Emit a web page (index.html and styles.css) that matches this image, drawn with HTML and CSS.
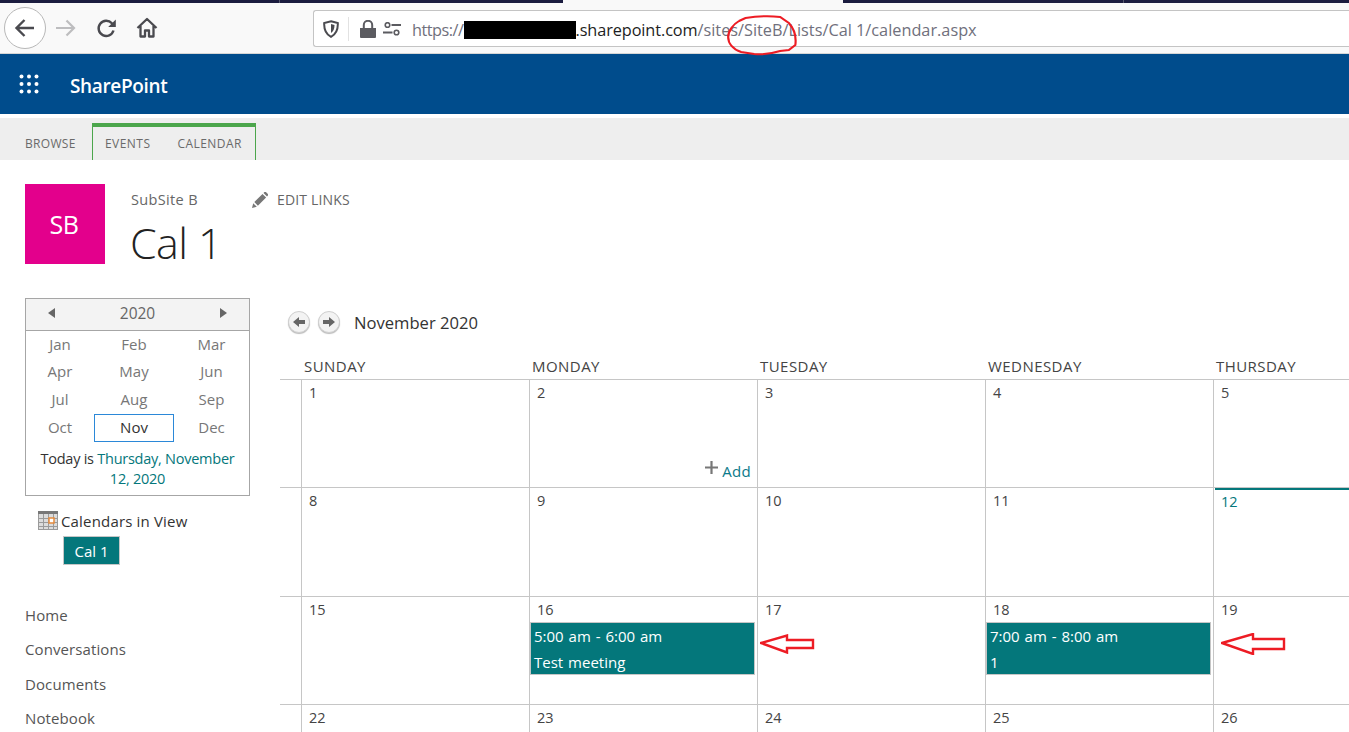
FILE: index.html
```html
<!DOCTYPE html>
<html lang="en">
<head>
<meta charset="utf-8">
<title>Cal 1</title>
<link rel="stylesheet" href="styles.css">
</head>
<body>
<div class="tabstrip">
  <div class="strip-seg strip-a"></div>
  <div class="strip-seg strip-b"></div>
  <div class="strip-active"></div>
  <div class="strip-seg strip-c"></div>
  <div class="strip-seg strip-d"></div>
</div>
<div class="toolbar">
  <div class="back-btn">
    <svg width="24" height="24" viewBox="0 0 24 24"><path d="M21 12H3.500M11.500 4l-8 8 8 8" fill="none" stroke="#4a4a4f" stroke-width="2.400"/></svg>
  </div>
  <svg class="tool fwd" width="22" height="22" viewBox="0 0 22 22"><path d="M1 11h18M11.500 3.500l7.500 7.500-7.500 7.500" fill="none" stroke="#bdbdbf" stroke-width="2.200"/></svg>
  <svg class="tool reload" width="22" height="22" viewBox="0 0 22 22"><path d="M17.500 13.500a7.600 7.600 0 1 1-1.600-7.200L18 8.500" fill="none" stroke="#4a4a4f" stroke-width="2.400"/><path d="M19.800 2.500v7.600h-7.600z" fill="#4a4a4f"/></svg>
  <svg class="tool home" width="22" height="22" viewBox="0 0 22 22"><path d="M1.500 11 11 2l9.500 9M4.500 9v10.500h4.500v-6h4v6h4.500V9" fill="none" stroke="#4a4a4f" stroke-width="2.300" stroke-linejoin="round"/></svg>
  <div class="urlbar">
    <svg class="shield" width="16" height="18" viewBox="0 0 16 18"><path d="M8 1.200 14.800 3c.3 6.500-1.500 11-6.800 13.800C2.700 14 .9 9.500 1.200 3z" fill="none" stroke="#4a4a4f" stroke-width="2"/><path d="M8 4v9c2.500-1.700 3.500-4.500 3.500-8z" fill="#4a4a4f"/></svg>
    <div class="url-sep"></div>
    <svg class="lock" width="16" height="18" viewBox="0 0 16 18"><path d="M0 8h16v9a1 1 0 0 1-1 1H1a1 1 0 0 1-1-1z" fill="#5b5b60"/><path d="M3.800 8.500V5a4.200 4.200 0 0 1 8.400 0v3.500" fill="none" stroke="#5b5b60" stroke-width="2"/></svg>
    <svg class="perm" width="18" height="14" viewBox="0 0 18 14"><circle cx="4.500" cy="3" r="2.300" fill="none" stroke="#5b5b60" stroke-width="1.600"/><path d="M8.500 3H18M0 10.500h9.500" stroke="#5b5b60" stroke-width="2"/><circle cx="13.500" cy="10.500" r="2.300" fill="none" stroke="#5b5b60" stroke-width="1.600"/></svg>
    <div class="url-text"><span class="url-scheme">https://</span><span class="redact"></span><span class="url-host">.sharepoint.com</span>/sites/SiteB/Lists/Cal 1/calendar.aspx</div>
  </div>
</div>
<header class="suitebar">
  <svg class="waffle" width="20" height="20" viewBox="0 0 20 20" fill="#fff">
    <circle cx="2.500" cy="2.500" r="2"/><circle cx="10" cy="2.500" r="2"/><circle cx="17.500" cy="2.500" r="2"/>
    <circle cx="2.500" cy="10" r="2"/><circle cx="10" cy="10" r="2"/><circle cx="17.500" cy="10" r="2"/>
    <circle cx="2.500" cy="17.500" r="2"/><circle cx="10" cy="17.500" r="2"/><circle cx="17.500" cy="17.500" r="2"/>
  </svg>
  <div class="brand">SharePoint</div>
</header>
<nav class="ribbon">
  <div class="rib-tab rib-browse">BROWSE</div>
  <div class="rib-group">
    <div class="rib-tab">EVENTS</div>
    <div class="rib-tab">CALENDAR</div>
  </div>
</nav>
<section class="site-head">
  <div class="logo">SB</div>
  <div class="site-titles">
    <div class="site-top">
      <div class="site-name">SubSite B</div>
      <div class="edit-links">
        <svg width="16" height="16" viewBox="0 0 16 16"><path d="M0 16l1.200-4.800 3.600 3.600zM2.300 10.100 10.500 1.900l3.600 3.600-8.200 8.200zM11.500.9 12.400 0a1.200 1.200 0 0 1 1.500 0l2 2a1.200 1.200 0 0 1 0 1.500l-.9.900z" fill="#777"/></svg>
        <span>EDIT LINKS</span>
      </div>
    </div>
    <h1 class="page-title">Cal 1</h1>
  </div>
</section>
<main class="content">
  <aside class="sidebar">
    <div class="datepicker">
      <div class="dp-head">
        <span class="tri tri-left"></span>
        <span class="dp-year">2020</span>
        <span class="tri tri-right"></span>
      </div>
      <div class="dp-months">
        <div>Jan</div><div>Feb</div><div>Mar</div>
        <div>Apr</div><div>May</div><div>Jun</div>
        <div>Jul</div><div>Aug</div><div>Sep</div>
        <div>Oct</div><div class="dp-current">Nov</div><div>Dec</div>
      </div>
      <div class="dp-today">Today is <span class="teal">Thursday, November 12, 2020</span></div>
    </div>
    <div class="civ">
      <svg width="20" height="19" viewBox="0 0 20 19">
        <rect width="20" height="19" fill="#dcdcdc"/>
        <rect width="20" height="3" fill="#777"/>
        <path d="M.5 3v16M5.500 3v16M10.500 3v16M15.500 3v16M19.500 3v16M0 7.500h20M0 11.500h20M0 15.500h20M0 18.500h20" stroke="#9a9a9a" stroke-width="1"/>
        <rect x="11" y="7" width="5" height="5" fill="#fff" stroke="#e58a3c" stroke-width="1.500"/>
      </svg>
      <span>Calendars in View</span>
    </div>
    <div class="cal-chip">Cal 1</div>
    <ul class="quicklaunch">
      <li>Home</li>
      <li>Conversations</li>
      <li>Documents</li>
      <li>Notebook</li>
    </ul>
  </aside>
  <section class="calendar">
    <div class="cal-nav">
      <span class="round-btn"><svg width="12" height="12" viewBox="0 0 12 12"><path d="M0 6l6-5v3h6v4H6v3z" fill="#666"/></svg></span>
      <span class="round-btn"><svg width="12" height="12" viewBox="0 0 12 12"><path d="M12 6 6 1v3H0v4h6v3z" fill="#666"/></svg></span>
      <span class="cal-month">November 2020</span>
    </div>
    <div class="weekdays">
      <div>SUNDAY</div><div>MONDAY</div><div>TUESDAY</div><div>WEDNESDAY</div><div>THURSDAY</div>
    </div>
    <div class="week h108">
      <div class="gutter"></div>
      <div class="day"><span class="num">1</span></div>
      <div class="day">
        <span class="num">2</span>
        <div class="add">
          <svg width="13" height="13" viewBox="0 0 13 13"><path d="M6.500 0v13M0 6.500h13" stroke="#777" stroke-width="2.200"/></svg>
          <span>Add</span>
        </div>
      </div>
      <div class="day"><span class="num">3</span></div>
      <div class="day"><span class="num">4</span></div>
      <div class="day"><span class="num">5</span></div>
    </div>
    <div class="week h109">
      <div class="gutter"></div>
      <div class="day"><span class="num">8</span></div>
      <div class="day"><span class="num">9</span></div>
      <div class="day"><span class="num">10</span></div>
      <div class="day"><span class="num">11</span></div>
      <div class="day"><div class="today-mark"></div><span class="num num-today">12</span></div>
    </div>
    <div class="week h108">
      <div class="gutter"></div>
      <div class="day"><span class="num">15</span></div>
      <div class="day">
        <span class="num">16</span>
        <div class="event"><div>5:00 am - 6:00 am</div><div>Test meeting</div></div>
      </div>
      <div class="day"><span class="num">17</span></div>
      <div class="day">
        <span class="num">18</span>
        <div class="event"><div>7:00 am - 8:00 am</div><div>1</div></div>
      </div>
      <div class="day"><span class="num">19</span></div>
    </div>
    <div class="week h-last">
      <div class="gutter"></div>
      <div class="day"><span class="num">22</span></div>
      <div class="day"><span class="num">23</span></div>
      <div class="day"><span class="num">24</span></div>
      <div class="day"><span class="num">25</span></div>
      <div class="day"><span class="num">26</span></div>
    </div>
  </section>
</main>
<svg class="annot annot-circle" width="78" height="42" viewBox="0 0 72 42" preserveAspectRatio="none"><path d="M12 6 18 3 C30 1 42 1 50 2 L58 8 C63 14 65 22 64 30 L58 35 L50 36 C44 38 34 40 26 39 L14 37 C6 34 2 28 2 22 C2 16 7 9 12 6" fill="none" stroke="#ed1c24" stroke-width="2"/></svg>
<svg class="annot annot-arrow1" width="56" height="20" viewBox="0 0 56 20"><path d="M1 9 27 1.500V6H53v8H27v4.500z" fill="none" stroke="#ed1c24" stroke-width="2.400"/></svg>
<svg class="annot annot-arrow2" width="66" height="22" viewBox="0 0 66 22"><path d="M1 10 32 1v5H63v10H32v5z" fill="none" stroke="#ed1c24" stroke-width="2.400"/></svg>
</body>
</html>
```
FILE: styles.css
```css
* { box-sizing: border-box; }
html, body { margin: 0; padding: 0; height: 732px; overflow: hidden; background: #fff; }
body { position: relative; font-family: "Open Sans", "Noto Sans", sans-serif; color: #444; font-size: 15px; letter-spacing: 0; }

.tabstrip { display: flex; height: 3px; background: #1b1c3f; }
.strip-seg { height: 3px; }
.strip-a { width: 280px; border-right: 1px solid #55566d; }
.strip-b { width: 283px; }
.strip-active { width: 280px; background: #f9f9f9; }
.strip-c { width: 281px; border-right: 1px solid #55566d; }
.strip-d { flex: 1; }

.toolbar { height: 51px; background: #f9f9f9; border-bottom: 1px solid #d6d6d6; display: flex; align-items: flex-start; padding: 4px 0 0 4px; }
.back-btn { width: 42px; height: 42px; border-radius: 50%; border: 1px solid #b8b8b8; background: #fff; display: flex; align-items: center; justify-content: center; }
.tool { margin-top: 10px; flex: none; }
.fwd { margin-left: 9px; }
.reload { margin-left: 19px; }
.home { margin-left: 18px; }
.urlbar { margin: 3px 0 0 155px; flex: 1; min-width: 0; height: 37px; background: #fff; border: 1px solid #c4c4c4; border-right: 0; border-radius: 3px 0 0 3px; display: flex; align-items: center; padding-left: 9px; }
.shield { flex: none; }
.url-sep { width: 1px; height: 24px; background: #e2e2e2; margin: 0 11px 0 9px; }
.lock { flex: none; }
.perm { flex: none; margin-left: 7px; }
.url-text { margin: 2px 0 0 11px; font-size: 16.3px; color: #70707c; white-space: nowrap; letter-spacing: 0; }
.url-scheme { letter-spacing: -0.5px; }
.url-host { color: #1d1d22; letter-spacing: -0.1px; }
.redact { display: inline-block; width: 112px; height: 18px; background: #000; vertical-align: -3px; }

.suitebar { height: 60px; background: #004c8c; display: flex; align-items: center; padding-left: 19px; }
.waffle { flex: none; margin-top: -1px; }
.brand { margin: 4px 0 0 31px; font-size: 19px; font-weight: 600; color: #fff; letter-spacing: -0.35px; }

.ribbon { margin-top: 4px; height: 42px; background: #eeeeee; display: flex; align-items: flex-end; padding-left: 12px; }
.rib-tab { font-size: 12px; color: #6a6a6a; padding: 0 13px; height: 34px; line-height: 36px; letter-spacing: 0.3px; }
.rib-browse { width: 80px; }
.rib-group { display: flex; height: 37px; background: #eee; border: 1px solid #4ca64c; border-top: 4px solid #4ca64c; border-bottom: 0; width: 164px; }
.rib-group .rib-tab { padding: 0 12px; height: 33px; line-height: 34px; flex: none; letter-spacing: 0.45px; }
.rib-group .rib-tab + .rib-tab { padding-left: 15px; padding-right: 0; }

.site-head { display: flex; padding: 24px 0 0 25px; height: 138px; }
.logo { width: 80px; height: 80px; background: #e3008c; color: #fff; font-size: 25px; display: flex; align-items: center; justify-content: center; letter-spacing: -0.5px; padding-right: 2px; }
.site-titles { margin-left: 26px; }
.site-top { display: flex; align-items: center; height: 30px; }
.site-name { font-size: 14.5px; color: #666; width: 121px; letter-spacing: 0.35px; }
.edit-links { display: flex; align-items: center; font-size: 14px; color: #666; gap: 9px; letter-spacing: 0.15px; margin-top: 1px; }
.page-title { margin: 4px 0 0 -1px; font-size: 43px; font-weight: 300; color: #222; line-height: 50px; letter-spacing: -0.6px; }

.content { display: flex; align-items: flex-start; height: 434px; overflow: hidden; }
.sidebar { width: 280px; flex: none; padding-left: 25px; height: 434px; overflow: hidden; }
.datepicker { width: 225px; height: 198px; border: 1px solid #a6a6a6; }
.dp-head { height: 32px; background: #f3f3f3; border-bottom: 1px solid #a6a6a6; display: flex; align-items: center; padding: 0 22px; justify-content: space-between; }
.dp-year { color: #666; font-size: 15.5px; margin-top: -3px; }
.tri { width: 0; height: 0; border-style: solid; margin-top: -3px; }
.tri-left { border-width: 5px 7px 5px 0; border-color: transparent #666 transparent transparent; }
.tri-right { border-width: 5px 0 5px 7px; border-color: transparent transparent transparent #666; }
.dp-months { display: grid; grid-template-columns: 68px 80px 75px; grid-template-rows: 27px 28px 28px 28px; text-align: center; color: #777; font-size: 15px; }
.dp-months > div { display: flex; align-items: center; justify-content: center; padding-bottom: 2px; }
.dp-months .dp-current { border: 1px solid #2b88d8; color: #333; padding-bottom: 2px; }
.dp-today { text-align: center; line-height: 20px; padding: 7px 4px 0; font-size: 14.5px; color: #333; letter-spacing: -0.25px; }
.teal { color: #04777b; }

.civ { display: flex; align-items: center; margin: 14px 0 0 13px; height: 21px; font-size: 15px; color: #333; gap: 3px; letter-spacing: 0.17px; }
.cal-chip { margin: 5px 0 0 38px; width: 57px; height: 29px; background: #04777b; border: 1px solid #c6c6c6; color: #fff; font-size: 15px; display: flex; align-items: center; justify-content: center; }
.quicklaunch { list-style: none; margin: 33px 0 0; padding: 0; color: #555; font-size: 15px; letter-spacing: 0.1px; }
.quicklaunch li { height: 34.4px; line-height: 35px; }

.calendar { flex: 1; min-width: 0; }
.cal-nav { display: flex; align-items: center; height: 48px; padding-left: 8px; }
.round-btn { width: 22px; height: 22px; border-radius: 50%; background: #f3f3f3; border: 1px solid #d0d0d0; box-shadow: 0 1px 1px #bbb; display: flex; align-items: center; justify-content: center; margin-right: 8px; }
.cal-month { margin-left: 6px; font-size: 16.6px; color: #333; letter-spacing: 0; }
.weekdays { display: grid; grid-template-columns: repeat(4, 228px) 1fr; padding: 6px 0 0 24px; height: 33px; align-items: center; font-size: 15px; color: #444; letter-spacing: 0.45px; }
.week { display: grid; grid-template-columns: 21px repeat(4, 228px) 136px; border-top: 1px solid #c6c6c6; }
.h108 { height: 108px; }
.h109 { height: 109px; }
.h-last { height: 28px; overflow: hidden; }
.day { border-left: 1px solid #c6c6c6; display: flex; flex-direction: column; min-width: 0; }
.num { display: block; height: 20px; line-height: 20px; margin: 3px 0 0 7px; font-size: 14.5px; color: #444; }
.num-today { color: #04777b; margin-top: 2px; }
.today-mark { height: 2px; margin-left: 1px; background: #04777b; }
.add { margin-top: auto; display: flex; justify-content: flex-end; align-items: flex-start; gap: 4px; padding-right: 6px; height: 28px; color: #0b7a8a; font-size: 15px; line-height: 22px; letter-spacing: 0.3px; }
.add span { margin-top: 1px; }
.add svg { margin-top: 2px; }
.event { margin: 2px 2px 0 0; height: 53px; background: #04777b; border: 1px solid #c6c6c6; color: #fff; padding: 0 0 0 3px; font-size: 15px; line-height: 26px; word-spacing: 1px; }

.annot { position: absolute; pointer-events: none; }
.annot-circle { left: 726px; top: 15px; }
.annot-arrow1 { left: 760px; top: 634px; }
.annot-arrow2 { left: 1221px; top: 633px; }
```
